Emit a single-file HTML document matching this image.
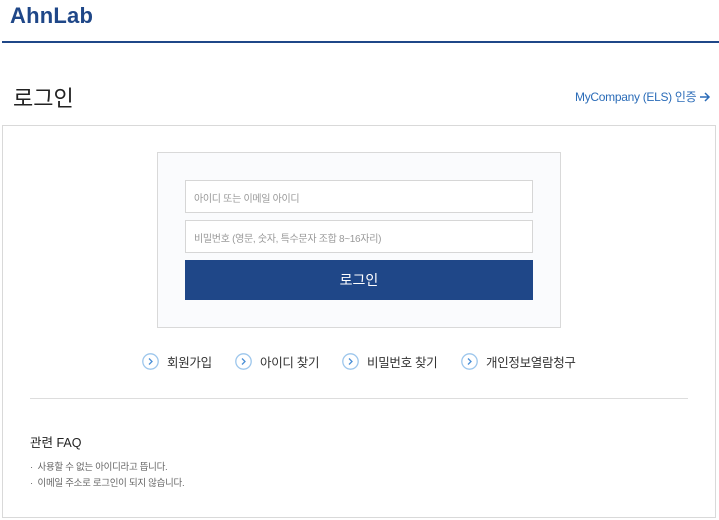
<!DOCTYPE html>
<html><head><meta charset="utf-8"><style>
*{margin:0;padding:0;box-sizing:border-box}
body{width:719px;height:520px;background:#fff;font-family:"Liberation Sans","Noto Sans CJK KR",sans-serif;position:relative;overflow:hidden;color:#222}
.a{position:absolute;white-space:nowrap}
.logo{left:10px;top:3px;font-size:22px;font-weight:bold;color:#1f4788;letter-spacing:0.2px}
.hl{left:2px;top:41px;width:717px;height:2px;background:#1f4788}
.title{left:13px;top:81px;font-size:22px;color:#222}
.els{left:575px;top:88px;font-size:12px;color:#2b6cb8;letter-spacing:-0.3px;display:flex;align-items:center}
.box{left:2px;top:125px;width:714px;height:393px;border:1px solid #d9d9d9}
.inner{left:157px;top:152px;width:404px;height:176px;border:1px solid #d9d9d9;background:#fafbfd}
.inp{left:185px;width:348px;height:33px;border:1px solid #d6d6d6;background:#fff;font-size:10px;color:#999;padding:9px 0 0 8px;letter-spacing:-0.3px}
.btn{left:185px;top:260px;width:348px;height:40px;background:#1f4788;color:#fff;font-size:14px;text-align:center;line-height:40px}
.lk{top:352px;font-size:12.5px;color:#333;display:flex;align-items:center;letter-spacing:-0.3px}
.lk svg{margin-right:8px}
.sep{left:30px;top:398px;width:658px;height:1px;background:#ddd}
.faq{left:30px;top:432px;font-size:12.5px;color:#222}
.li{left:30px;font-size:9.5px;color:#666;letter-spacing:-0.3px}
</style></head><body>
<div class="a logo">AhnLab</div>
<div class="a hl"></div>
<div class="a title">로그인</div>
<div class="a els">MyCompany (ELS) 인증&nbsp;<svg width="12" height="12" viewBox="0 0 12 12"><path d="M1 6H10M6 2L10 6L6 10" fill="none" stroke="#2b6cb8" stroke-width="1.5"/></svg></div>
<div class="a box"></div>
<div class="a inner"></div>
<div class="a inp" style="top:180px">아이디 또는 이메일 아이디</div>
<div class="a inp" style="top:220px">비밀번호 (영문, 숫자, 특수문자 조합 8~16자리)</div>
<div class="a btn">로그인</div>
<div class="a lk" style="left:142px"><svg width="17" height="17" viewBox="0 0 17 17"><circle cx="8.5" cy="8.5" r="7.7" fill="none" stroke="#9cc6ec" stroke-width="1.3"/><path d="M7 5.5L10 8.5L7 11.5" fill="none" stroke="#4a8fd6" stroke-width="1.3"/></svg>회원가입</div>
<div class="a lk" style="left:235px"><svg width="17" height="17" viewBox="0 0 17 17"><circle cx="8.5" cy="8.5" r="7.7" fill="none" stroke="#9cc6ec" stroke-width="1.3"/><path d="M7 5.5L10 8.5L7 11.5" fill="none" stroke="#4a8fd6" stroke-width="1.3"/></svg>아이디 찾기</div>
<div class="a lk" style="left:342px"><svg width="17" height="17" viewBox="0 0 17 17"><circle cx="8.5" cy="8.5" r="7.7" fill="none" stroke="#9cc6ec" stroke-width="1.3"/><path d="M7 5.5L10 8.5L7 11.5" fill="none" stroke="#4a8fd6" stroke-width="1.3"/></svg>비밀번호 찾기</div>
<div class="a lk" style="left:461px"><svg width="17" height="17" viewBox="0 0 17 17"><circle cx="8.5" cy="8.5" r="7.7" fill="none" stroke="#9cc6ec" stroke-width="1.3"/><path d="M7 5.5L10 8.5L7 11.5" fill="none" stroke="#4a8fd6" stroke-width="1.3"/></svg>개인정보열람청구</div>
<div class="a sep"></div>
<div class="a faq">관련 FAQ</div>
<div class="a li" style="top:459px">·&nbsp; 사용할 수 없는 아이디라고 뜹니다.</div>
<div class="a li" style="top:475px">·&nbsp; 이메일 주소로 로그인이 되지 않습니다.</div>
</body></html>
